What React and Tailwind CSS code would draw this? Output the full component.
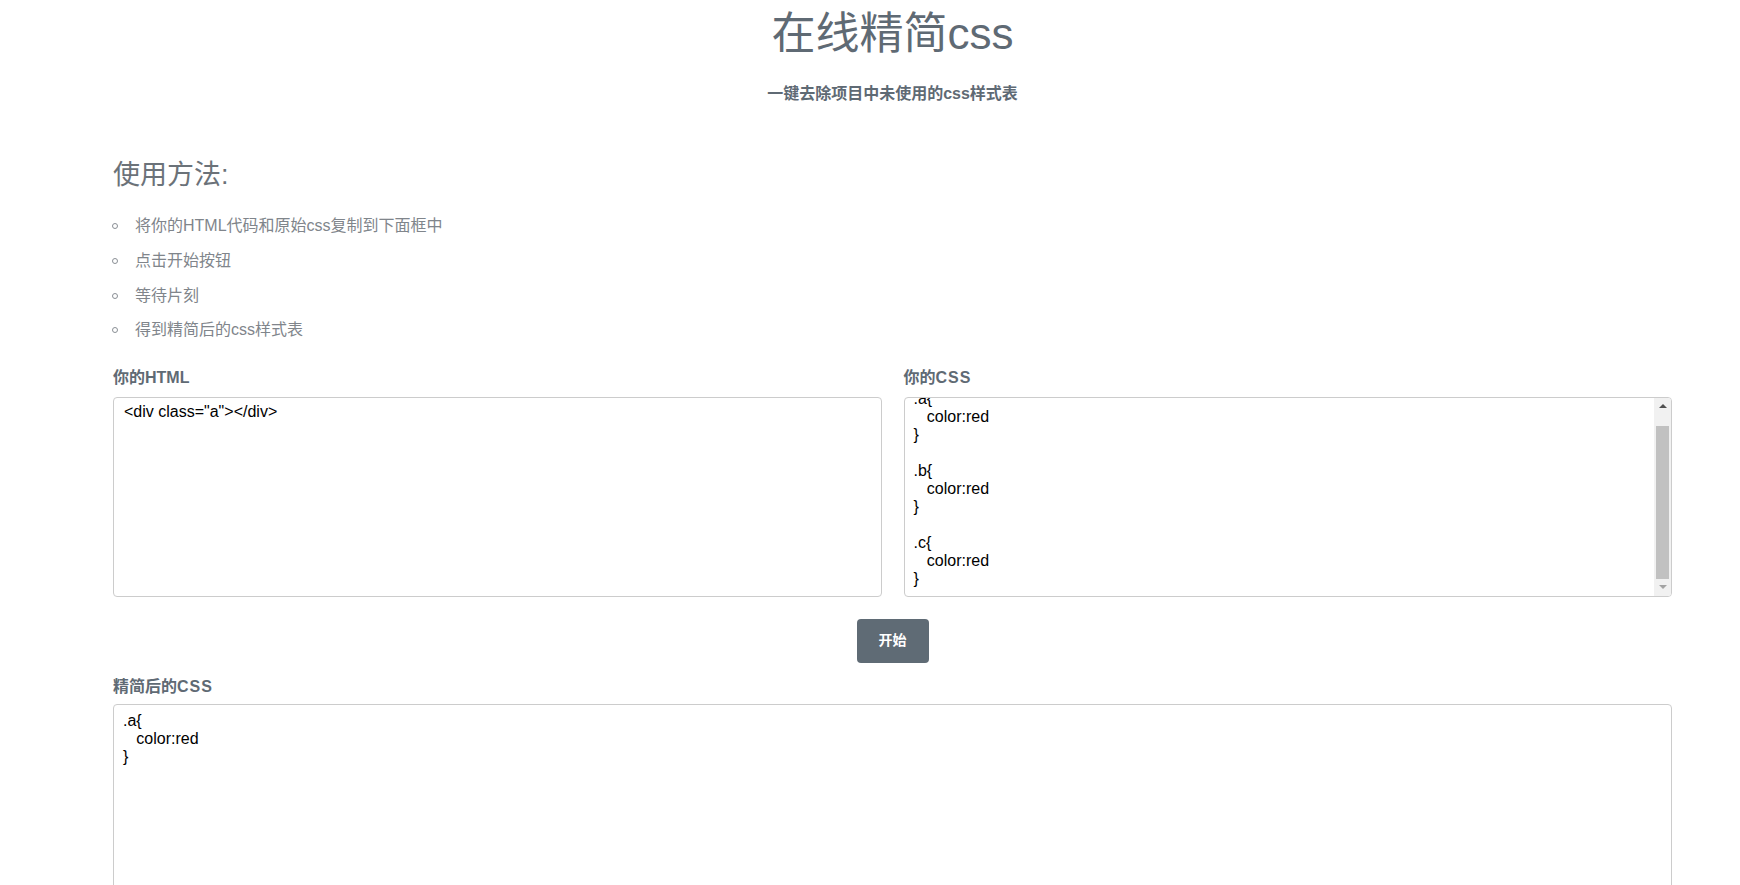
import React from 'react';

const steps = [
    '将你的HTML代码和原始css复制到下面框中',
    '点击开始按钮',
    '等待片刻',
    '得到精简后的css样式表',
];

const cssSource = `.a{
   color:red
}

.b{
   color:red
}

.c{
   color:red
}`;

const cssResult = `.a{
   color:red
}`;

const Label = ({ children }) => (
    <h3 className="text-[16px] leading-[20px] font-bold text-[#5f6a74]">{children}</h3>
);

// fake windows style scrollbar, scrolled to the bottom
const ScrollBar = () => (
    <div className="w-[17px] bg-[#f1f1f1] flex flex-col shrink-0">
        <div className="h-[17px] flex items-center justify-center">
            <div className="w-0 h-0 border-l-[4px] border-r-[4px] border-b-[4px] border-l-transparent border-r-transparent border-b-[#505050]" />
        </div>
        <div className="flex-1 flex flex-col justify-end px-[2px]">
            <div className="h-[153px] bg-[#c1c1c1]" />
        </div>
        <div className="h-[17px] flex items-center justify-center">
            <div className="w-0 h-0 border-l-[4px] border-r-[4px] border-t-[4px] border-l-transparent border-r-transparent border-t-[#a3a3a3]" />
        </div>
    </div>
);

const App = () => {
    return (
        <div className="min-h-screen bg-white font-['Liberation_Sans','Noto_Sans_CJK_SC',sans-serif]">
            <div className="ml-[113px] w-[1559px]">
                {/* cabeçalho */}
                <div className="text-center text-[#5f6a74]">
                    <h1 className="mt-[12px] text-[44px] leading-[44px]">在线精简css</h1>
                    <p className="mt-[28px] text-[16px] leading-[20px] font-bold">一键去除项目中未使用的css样式表</p>
                </div>

                {/* instruções */}
                <h2 className="mt-[55px] text-[27px] leading-[32px] text-[#6b7279]">使用方法:</h2>
                <ul className="mt-[18px]">
                    {steps.map(step => (
                        <li key={step} className="flex items-center h-[34.7px] text-[16px] text-[#80858b]">
                            <span className="ml-[-1px] w-[6px] h-[6px] rounded-full border border-[#8a8f95]" />
                            <span className="ml-[17px]">{step}</span>
                        </li>
                    ))}
                </ul>

                {/* entradas */}
                <div className="mt-[20px] grid grid-cols-2 gap-[22px]">
                    <div>
                        <Label>你的HTML</Label>
                        <div className="mt-[9px] h-[200px] border border-[#cccccc] rounded-[4px] pt-[5px] px-[10px] text-[16px] leading-[18px] text-black whitespace-pre">
                            {'<div class="a"></div>'}
                        </div>
                    </div>
                    <div>
                        <Label>你的<span className="tracking-[1px]">CSS</span></Label>
                        <div className="mt-[9px] h-[200px] border border-[#cccccc] rounded-[4px] flex overflow-hidden">
                            <div className="flex-1 overflow-hidden pl-[9px]">
                                <div className="mt-[-8px] text-[16px] leading-[18px] text-black whitespace-pre">{cssSource}</div>
                            </div>
                            <ScrollBar />
                        </div>
                    </div>
                </div>

                <div className="mt-[22px] flex justify-center">
                    <button className="w-[72px] h-[44px] rounded-[4px] bg-[#5f6b75] text-white text-[14px] font-bold">开始</button>
                </div>

                {/* resultado */}
                <div className="mt-[14px]">
                    <Label>精简后的<span className="tracking-[1px]">CSS</span></Label>
                    <div className="mt-[7px] h-[300px] border border-[#cccccc] rounded-[4px] pt-[7px] px-[9px] text-[16px] leading-[18px] text-black whitespace-pre">
                        {cssResult}
                    </div>
                </div>
            </div>
        </div>
    );
};

export default App;
